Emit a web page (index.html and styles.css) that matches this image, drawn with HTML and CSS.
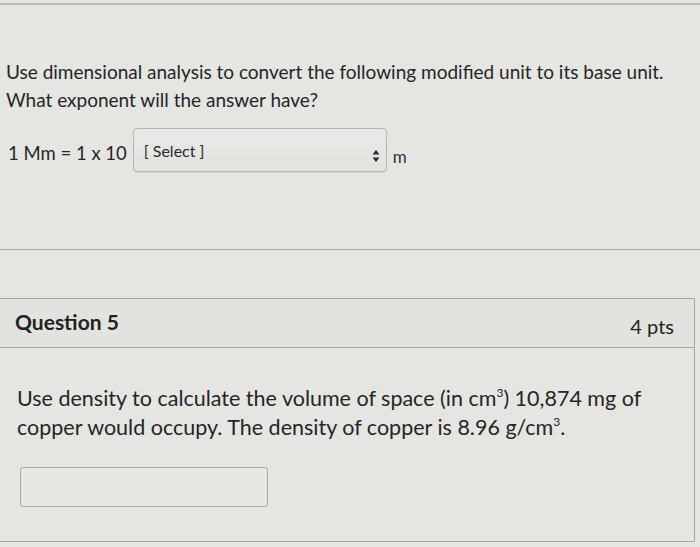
FILE: index.html
```html
<!DOCTYPE html>
<html>
<head>
<meta charset="utf-8">
<link rel="stylesheet" href="styles.css">
</head>
<body>
<div class="page">
  <div class="top-rule"></div>
  <section class="q4">
    <p class="q4-text">Use dimensional analysis to convert the following modified unit to its base unit.<br>What exponent will the answer have?</p>
    <div class="eq-row">
      <span class="eq">1 Mm = 1 x 10</span>
      <div class="select">
        <span class="select-label">[ Select ]</span>
        <svg class="arrows" width="8" height="14" viewBox="0 0 8 14"><path d="M4 1 L7.5 5.5 L0.5 5.5 Z M4 13 L7.5 8.5 L0.5 8.5 Z" fill="#2a2a2a"/></svg>
      </div>
      <span class="unit">m</span>
    </div>
  </section>
  <div class="mid-rule"></div>
  <section class="q5">
    <header class="q5-head">
      <span class="q5-title">Question 5</span>
      <span class="q5-pts">4 pts</span>
    </header>
    <div class="q5-body">
      <p class="q5-text">Use density to calculate the volume of space (in cm<sup>3</sup>) 10,874 mg of<br>copper would occupy. The density of copper is 8.96 g/cm<sup>3</sup>.</p>
      <div class="answer"></div>
    </div>
  </section>
</div>
</body>
</html>
```
FILE: styles.css
```css
html, body {
  margin: 0;
  padding: 0;
}
body {
  background: #e5e5e2;
  font-family: Lato, "Open Sans", sans-serif;
  color: #262626;
  width: 700px;
  height: 547px;
  overflow: hidden;
}
.page {
  padding-top: 3px;
}
.top-rule {
  height: 0;
  border-top: 2px solid #b9b9b6;
}
.q4 {
  padding: 53px 0 0 6px;
}
.q4-text {
  margin: 0;
  font-size: 19px;
  line-height: 28px;
}
.eq-row {
  display: flex;
  align-items: center;
  margin-top: 14px;
}
.eq {
  font-size: 18.5px;
  padding-top: 6px;
  margin-left: 2px;
}
.select {
  margin-left: 6px;
  width: 236px;
  height: 42px;
  border: 1px solid #b7b7b4;
  border-radius: 4px;
  background: linear-gradient(#e9e9e7, #e2e2df);
  box-shadow: 0 1px 1px rgba(0,0,0,0.08);
  display: flex;
  align-items: flex-start;
  justify-content: space-between;
  padding: 0 6px 0 10px;
  box-sizing: content-box;
}
.select-label {
  font-size: 16px;
  padding-top: 12px;
  color: #2a2a2a;
}
.arrows {
  margin-top: 20px;
}
.unit {
  font-size: 17px;
  margin-left: 6px;
  padding-top: 12px;
  color: #333;
}
.mid-rule {
  margin-top: 77px;
  border-top: 1px solid #a9a9a6;
}
.q5 {
  margin-top: 48px;
  width: 694px;
  border-top: 1px solid #a6a6a3;
  border-right: 1px solid #a6a6a3;
  border-bottom: 1px solid #a6a6a3;
  height: 242px;
}
.q5-head {
  display: flex;
  justify-content: space-between;
  align-items: center;
  height: 48px;
  border-bottom: 1px solid #a6a6a3;
  padding: 0 20px 0 15px;
  background: #e2e2df;
}
.q5-title {
  font-size: 21px;
  font-weight: 700;
  color: #222;
  margin-top: -4px;
}
.q5-pts {
  font-size: 20px;
  color: #222;
  margin-top: 6px;
}
.q5-body {
  padding: 36px 0 0 17px;
}
.q5-text {
  margin: 0;
  font-size: 21.5px;
  line-height: 29px;
}
.q5-text sup {
  font-size: 12px;
  line-height: 0;
  vertical-align: 9px;
}
.answer {
  margin-top: 25px;
  margin-left: 3px;
  width: 246px;
  height: 38px;
  border: 1px solid #a9a9a6;
  border-radius: 3px;
  background: #e7e7e4;
}
```
